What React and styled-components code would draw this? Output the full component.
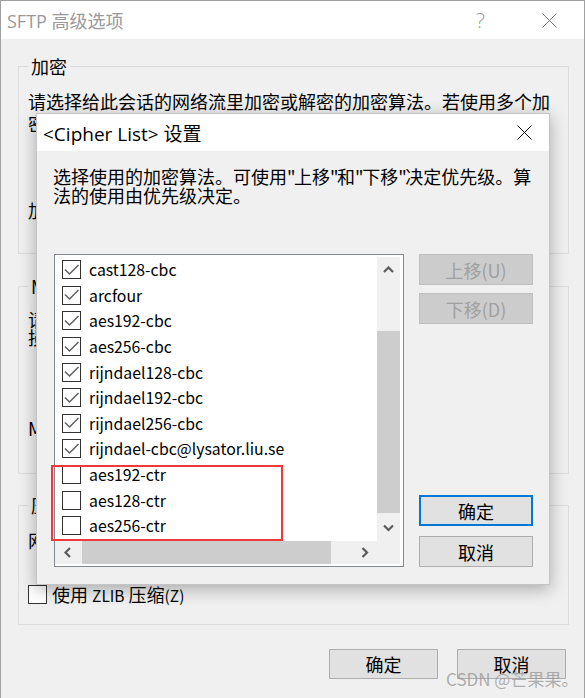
import styled, { createGlobalStyle } from "styled-components";

const GlobalStyle = createGlobalStyle`
  html, body {
    margin: 0;
    padding: 0;
    background: #ffffff;
  }
  body {
    font-family: "Noto Sans CJK SC", sans-serif;
    color: #000;
  }
`;

const Window = styled.div`
  position: relative;
  box-sizing: border-box;
  width: 585px;
  height: 698px;
  border: 1px solid #a0a0a0;
  border-bottom: none;
  background: #f0f0f0;
  overflow: hidden;
`;

const TitleBar = styled.div`
  display: flex;
  align-items: center;
  height: ${(p) => p.$h}px;
  background: #fff;
  flex: none;
`;

const TitleText = styled.div`
  flex: 1;
  padding-left: 6px;
  font-family: "Open Sans", "Noto Sans CJK SC", sans-serif;
  font-size: ${(p) => p.$size}px;
  color: ${(p) => (p.$inactive ? "#999" : "#000")};
  white-space: nowrap;
`;

const CaptionButton = styled.div`
  width: ${(p) => p.$w}px;
  height: 100%;
  display: flex;
  align-items: center;
  justify-content: center;
  font-family: "Open Sans", sans-serif;
  font-weight: 300;
  font-size: 21px;
  color: #999;
`;

const Content = styled.div`
  display: flex;
  flex-direction: column;
  padding: 17px 15px 0 17px;
`;

const Group = styled.fieldset`
  box-sizing: border-box;
  height: ${(p) => p.$h}px;
  margin: 0 0 ${(p) => p.$gap || 0}px;
  padding: 14px 8px 0 9px;
  border: 1px solid #dcdcdc;
  min-width: 0;
`;

const Legend = styled.legend`
  padding: 0 3px;
  font-size: 18px;
  line-height: 20px;
`;

const Para = styled.div`
  font-size: 18px;
  line-height: ${(p) => p.$lh || 22}px;
  margin-top: ${(p) => p.$top || 0}px;
  white-space: ${(p) => (p.$nowrap ? "nowrap" : "normal")};
`;

const CheckRow = styled.div`
  display: flex;
  align-items: center;
  gap: 5px;
  height: 22px;
  margin-top: ${(p) => p.$top || 0}px;
  font-size: 18px;
`;

const CheckLabel = styled.span`
  white-space: nowrap;
`;

const Latin = styled.span`
  font-size: 15.5px;
`;

const ButtonRow = styled.div`
  display: flex;
  justify-content: flex-end;
  gap: 19px;
  margin-top: 24px;
  padding-right: 3px;
`;

const PushButton = styled.div`
  box-sizing: border-box;
  width: ${(p) => p.$w}px;
  height: ${(p) => p.$h}px;
  display: flex;
  align-items: center;
  justify-content: center;
  font-size: 18px;
  background: ${(p) => (p.$disabled ? "#cccccc" : "#e1e1e1")};
  color: ${(p) => (p.$disabled ? "#a0a0a0" : "#000")};
  border: ${(p) =>
    p.$default
      ? "2px solid #0078d7"
      : p.$disabled
      ? "1px solid #bfbfbf"
      : "1px solid #adadad"};
`;

const Box = styled.span`
  box-sizing: border-box;
  flex: none;
  width: 19px;
  height: 19px;
  border: 1.5px solid #333;
  background: #fff;
  display: flex;
  align-items: center;
  justify-content: center;
`;

const Dialog = styled.div`
  position: absolute;
  left: 35px;
  top: 112px;
  box-sizing: border-box;
  width: 514px;
  height: 472px;
  border: 1px solid #c4c4c4;
  background: #f0f0f0;
  box-shadow: 0 4px 16px rgba(0, 0, 0, 0.3);
  display: flex;
  flex-direction: column;
`;

const DialogBody = styled.div`
  padding: 16px 16px 0 16px;
`;

const Description = styled.div`
  font-size: 18px;
  line-height: 19px;
  white-space: nowrap;
`;

const Quote = styled.span`
  letter-spacing: -1.5px;
`;

const MainRow = styled.div`
  display: flex;
  gap: 15px;
  margin-top: 49px;
  padding-left: 1px;
`;

const ListBox = styled.div`
  position: relative;
  box-sizing: border-box;
  width: 350px;
  height: 313px;
  border: 1px solid #828790;
  background: #fff;
  padding: 2px 3px 2px 0;
  display: grid;
  grid-template-columns: 1fr 23px;
  grid-template-rows: 1fr 23px;
`;

const Items = styled.div`
  overflow: hidden;
`;

const Item = styled.div`
  display: flex;
  align-items: center;
  gap: 8px;
  height: 25.6px;
  padding-left: 7px;
  font-size: 15.8px;
  white-space: nowrap;
`;

const VScroll = styled.div`
  display: flex;
  flex-direction: column;
  background: #f0f0f0;
`;

const HScroll = styled.div`
  display: flex;
  background: #f0f0f0;
`;

const Arrow = styled.div`
  flex: none;
  width: ${(p) => (p.$vertical ? "auto" : "25px")};
  height: ${(p) => (p.$vertical ? "26px" : "auto")};
  display: flex;
  align-items: center;
  justify-content: center;
`;

const Track = styled.div`
  flex: 1;
  display: flex;
  flex-direction: ${(p) => (p.$vertical ? "column" : "row")};
`;

const Thumb = styled.div`
  flex: none;
  background: #cdcdcd;
  ${(p) =>
    p.$vertical
      ? `margin-top: ${p.$offset}px; height: ${p.$size}px;`
      : `margin-left: ${p.$offset}px; width: ${p.$size}px;`}
`;

const Corner = styled.div`
  background: #f0f0f0;
`;

const Highlight = styled.div`
  position: absolute;
  left: -4px;
  top: 210px;
  box-sizing: border-box;
  width: 232px;
  height: 76px;
  border: 2.5px solid #f03a3a;
  pointer-events: none;
`;

const SideButtons = styled.div`
  display: flex;
  flex-direction: column;
  justify-content: space-between;
  width: 114px;
`;

const ButtonStack = styled.div`
  display: flex;
  flex-direction: column;
  gap: ${(p) => p.$gap}px;
`;

const Watermark = styled.div`
  position: absolute;
  left: 445px;
  top: 666px;
  font-size: 17px;
  line-height: 24px;
  color: rgba(150, 150, 150, 0.75);
  white-space: nowrap;
`;

const ciphers = [
  ["cast128-cbc", true],
  ["arcfour", true],
  ["aes192-cbc", true],
  ["aes256-cbc", true],
  ["rijndael128-cbc", true],
  ["rijndael192-cbc", true],
  ["rijndael256-cbc", true],
  ["rijndael-cbc@lysator.liu.se", true],
  ["aes192-ctr", false],
  ["aes128-ctr", false],
  ["aes256-ctr", false],
];

const CloseIcon = ({ color }) => (
  <svg width="15" height="15" viewBox="0 0 15 15">
    <path d="M0.5 0.5 L14.5 14.5 M14.5 0.5 L0.5 14.5" stroke={color} strokeWidth="1" fill="none" />
  </svg>
);

const Chevron = ({ dir }) => {
  const pts = {
    up: "1,6 5.5,1.5 10,6",
    down: "1,1.5 5.5,6 10,1.5",
    left: "6,1 1.5,5.5 6,10",
    right: "1.5,1 6,5.5 1.5,10",
  }[dir];
  const vertical = dir === "up" || dir === "down";
  return (
    <svg width={vertical ? 11 : 8} height={vertical ? 8 : 11} viewBox={vertical ? "0 0 11 8" : "0 0 8 11"}>
      <polyline points={pts} fill="none" stroke="#5a5a5a" strokeWidth="2.2" />
    </svg>
  );
};

const CheckBox = ({ checked }) => (
  <Box>
    {checked && (
      <svg width="16" height="16" viewBox="0 0 16 16">
        <polyline points="1,7.5 5.5,12 14.5,3" fill="none" stroke="#5f5f5f" strokeWidth="1.5" />
      </svg>
    )}
  </Box>
);

export default function App() {
  return (
    <>
      <GlobalStyle />
      <Window>
        <TitleBar $h={38}>
          <TitleText $size={18} $inactive>
            SFTP 高级选项
          </TitleText>
          <CaptionButton $w={69}>?</CaptionButton>
          <CaptionButton $w={69}>
            <CloseIcon color="#777" />
          </CaptionButton>
        </TitleBar>

        <Content>
          <Group $h={198} $gap={22}>
            <Legend>加密</Legend>
            <Para>
              请选择给此会话的网络流里加密或解密的加密算法。若使用多个加密算法，将按优先级使用。
            </Para>
            <Para $top={65}>加密算法(C):</Para>
          </Group>

          <Group $h={198} $gap={21}>
            <Legend>MAC</Legend>
            <Para $lh={18} $nowrap>
              请选择用于检查此会话数据是否被篡改或
            </Para>
            <Para $lh={18} $nowrap>
              损坏的MAC算法。
            </Para>
            <Para $top={71}>MAC(M):</Para>
          </Group>

          <Group $h={130}>
            <Legend>压缩</Legend>
            <Para>网络流量压缩可提高传输速度。</Para>
            <CheckRow $top={32}>
              <CheckBox />
              <CheckLabel>
                使用 <Latin>ZLIB</Latin> 压缩<Latin>(Z)</Latin>
              </CheckLabel>
            </CheckRow>
          </Group>

          <ButtonRow>
            <PushButton $w={109} $h={30}>确定</PushButton>
            <PushButton $w={109} $h={30}>取消</PushButton>
          </ButtonRow>
        </Content>

        <Dialog>
          <TitleBar $h={37}>
            <TitleText $size={19}>&lt;Cipher List&gt; 设置</TitleText>
            <CaptionButton $w={50}>
              <CloseIcon color="#000" />
            </CaptionButton>
          </TitleBar>
          <DialogBody>
            <Description>
              选择使用的加密算法。可使用<Quote>"</Quote>上移<Quote>"</Quote>和<Quote>"</Quote>下移
              <Quote>"</Quote>决定优先级。算
              <br />
              法的使用由优先级决定。
            </Description>
            <MainRow>
              <ListBox>
                <Items>
                  {ciphers.map(([name, on]) => (
                    <Item key={name}>
                      <CheckBox checked={on} />
                      {name}
                    </Item>
                  ))}
                </Items>
                <VScroll>
                  <Arrow $vertical>
                    <Chevron dir="up" />
                  </Arrow>
                  <Track $vertical>
                    <Thumb $vertical $offset={48} $size={182} />
                  </Track>
                  <Arrow $vertical>
                    <Chevron dir="down" />
                  </Arrow>
                </VScroll>
                <HScroll>
                  <Arrow>
                    <Chevron dir="left" />
                  </Arrow>
                  <Track>
                    <Thumb $offset={2} $size={249} />
                  </Track>
                  <Arrow>
                    <Chevron dir="right" />
                  </Arrow>
                </HScroll>
                <Corner />
                <Highlight />
              </ListBox>
              <SideButtons>
                <ButtonStack $gap={8}>
                  <PushButton $w={114} $h={31} $disabled>
                    上移(U)
                  </PushButton>
                  <PushButton $w={114} $h={31} $disabled>
                    下移(D)
                  </PushButton>
                </ButtonStack>
                <ButtonStack $gap={10}>
                  <PushButton $w={114} $h={31} $default>
                    确定
                  </PushButton>
                  <PushButton $w={114} $h={31}>
                    取消
                  </PushButton>
                </ButtonStack>
              </SideButtons>
            </MainRow>
          </DialogBody>
        </Dialog>

        <Watermark>CSDN @芒果果。</Watermark>
      </Window>
    </>
  );
}
